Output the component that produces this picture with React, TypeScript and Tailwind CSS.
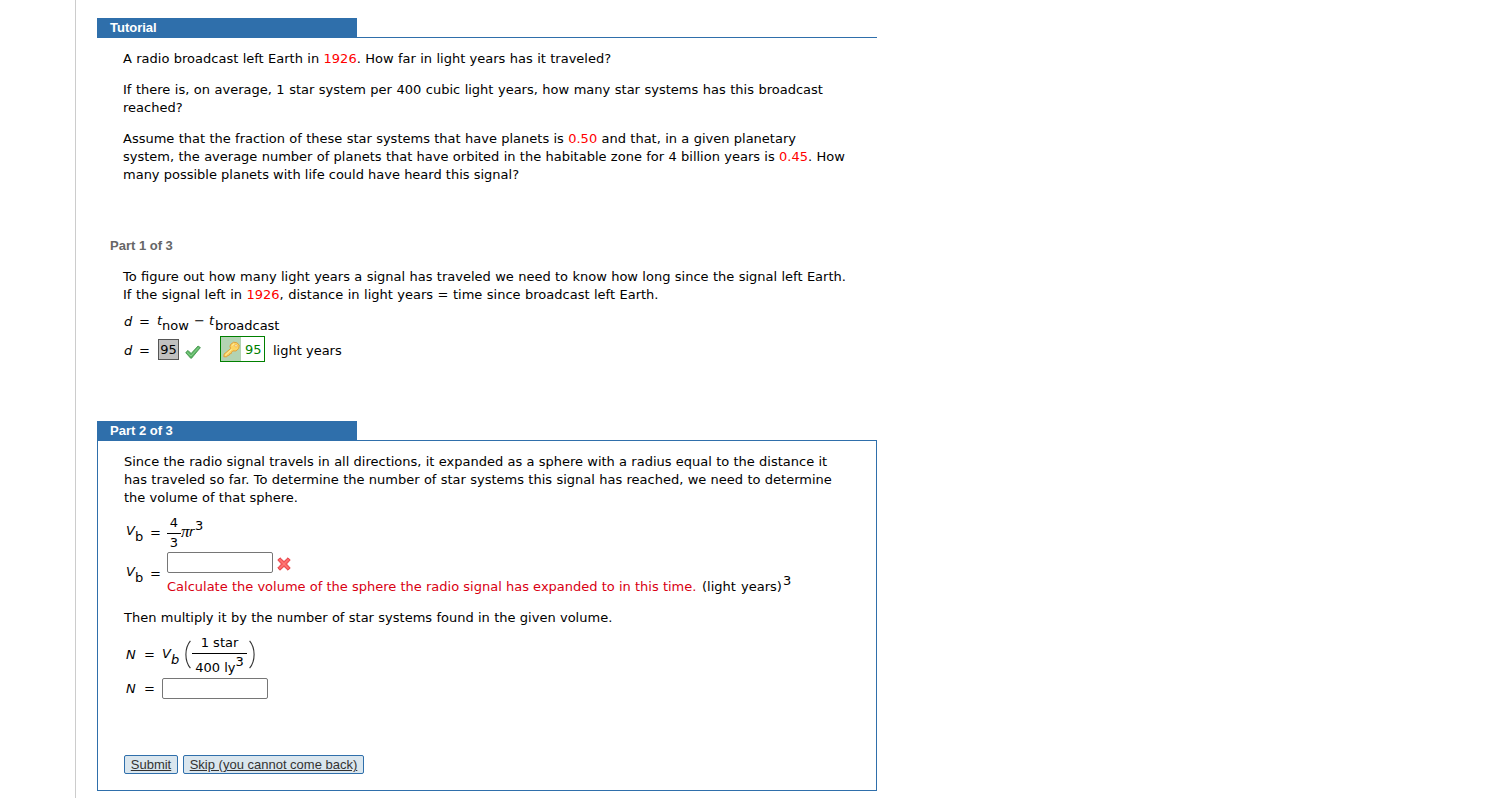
import type { ReactNode } from 'react';

function Val({ children }: { children: ReactNode }) {
    return <span className="text-[#ff0000]">{children}</span>;
}

// One equation row, every term hangs from the top of the row
function Row({ className, children }: { className: string; children: ReactNode }) {
    return <div className={`flex items-start whitespace-pre ${className}`}>{children}</div>;
}

function Heading({ children }: { children: ReactNode }) {
    return (
        <h2 className="w-[260px] h-5 pl-[13px] bg-[#2f6fab] text-white font-bold text-[13px] leading-[19px] font-['Liberation_Sans',Arial,sans-serif]">
            {children}
        </h2>
    );
}

function CheckIcon() {
    return (
        <svg width="16" height="14" viewBox="0 0 16 14">
            <path d="M0.7 7.6L3 5.4L6.1 8.5L13 1L15.4 2.6L6.6 13.2H5.6Z" fill="#5cb564" stroke="#3d8f45" strokeWidth="0.8" strokeLinejoin="round" />
            <path d="M2 7.3L6 11L13.7 2.5" fill="none" stroke="#8ad28e" strokeWidth="0.9" />
        </svg>
    );
}

function KeyIcon() {
    return (
        <svg width="18" height="18" viewBox="0 0 18 18">
            <path d="M7.6 3.4L10.6 1.2L13.9 1.8L16.2 4L15.8 7.4L13 10L9.8 9.9L8.6 11.2L8.2 12.6L6.8 12.8L6.2 14.2L4.6 14.5L3.8 15.8L0.9 15.8L1 13.2L7.6 7.6L7 5.4Z" fill="#fcd562" stroke="#e0a03a" strokeWidth="1" strokeLinejoin="round" />
            <path d="M8.6 8.3L2.3 14.2M8.8 4.6L11 2.8" stroke="#fff0a8" strokeWidth="1" fill="none" />
            <circle cx="13" cy="4.8" r="1.1" fill="#fff" stroke="#e0a03a" strokeWidth="0.6" />
        </svg>
    );
}

function CrossIcon() {
    return (
        <svg width="14" height="14" viewBox="0 0 14 14">
            <path d="M3 0.8L7 4.6L11 0.8L13.2 3L9.5 7L13.2 11L11 13.2L7 9.4L3 13.2L0.8 11L4.5 7L0.8 3Z" fill="#fb6464" stroke="#e33e44" strokeWidth="1" strokeLinejoin="round" />
            <path d="M3 2.8L11 11.2M11 2.8L3 11.2" stroke="#ff7a76" strokeWidth="1" />
        </svg>
    );
}

function Paren({ flip }: { flip?: boolean }) {
    return (
        <svg width="6" height="29" viewBox="0 0 6 29" className={flip ? '-scale-x-100' : ''}>
            <path d="M5.4 0.8C-0.6 8 -0.6 21 5.4 28.2" fill="none" stroke="#333" strokeWidth="1.1" />
        </svg>
    );
}

const inputStyle = 'block w-[106px] h-[21px] bg-white border border-[#767676] rounded-[2px] px-1 outline-none';
const buttonStyle = "h-[19px] bg-[#dae6ee] border border-[#2f6fab] rounded-[2px] text-[13px] leading-[17px] text-[#333] underline text-center font-['Liberation_Sans',Arial,sans-serif] whitespace-nowrap";

export default function App() {
    return (
        <main className="h-[798px] overflow-hidden bg-white pl-[75px] text-[13px] leading-[18px] text-black font-['Verdana','DejaVu_Sans',sans-serif]">
            <div className="h-full border-l border-[#ccc] pl-[21px] pt-[18px]">
                <div className="w-[780px]">
                    {/* Tutorial */}
                    <section className="h-[220px]">
                        <div className="border-b border-[#2f6fab] h-5">
                            <Heading>Tutorial</Heading>
                        </div>
                        <div className="pl-[26px] pt-3 whitespace-nowrap">
                            <p className="mb-[13px] [word-spacing:0.25px]">A radio broadcast left Earth in <Val>1926</Val>. How far in light years has it traveled?</p>
                            <p className="mb-[13px] [word-spacing:0.37px]">
                                If there is, on average, 1 star system per 400 cubic light years, how many star systems has this broadcast<br />
                                reached?
                            </p>
                            <p className="[word-spacing:0.2px]">
                                Assume that the fraction of these star systems that have planets is <Val>0.50</Val> and that, in a given planetary<br />
                                system, the average number of planets that have orbited in the habitable zone for 4 billion years is <Val>0.45</Val>. How<br />
                                <span className="[word-spacing:0]">many possible planets with life could have heard this signal?</span>
                            </p>
                        </div>
                    </section>

                    {/* Part 1 */}
                    <section className="h-[183px]">
                        <h2 className="pl-[13px] font-bold text-[13px] leading-4 text-[#666] font-['Liberation_Sans',Arial,sans-serif]">Part 1 of 3</h2>
                        <div className="pl-[26px] pt-[14px] whitespace-nowrap">
                            <p className="[word-spacing:0.24px]">
                                To figure out how many light years a signal has traveled we need to know how long since the signal left Earth.<br />
                                <span className="[word-spacing:0.34px]">If the signal left in <Val>1926</Val>, distance in light years = time since broadcast left Earth.</span>
                            </p>
                            <Row className="h-8 pt-[9px]">
                                <i className="ml-px w-[15px]">d</i>
                                <span className="w-[18px]">=</span>
                                <i className="w-[5px] -mt-px">t</i>
                                <span className="w-8 mt-1">now</span>
                                <span className="w-[15px] -mt-px">−</span>
                                <i className="w-[6px] -mt-px">t</i>
                                <span className="mt-1">broadcast</span>
                            </Row>
                            <Row className="h-[26px]">
                                <i className="ml-px mt-[6px] w-[15px]">d</i>
                                <span className="mt-[6px] w-[19px]">=</span>
                                <span className="mt-[3px] w-[21px] h-[21px] leading-5 bg-[#c0c0c0] border border-[#555] text-center">95</span>
                                <span className="mt-[9px] ml-1.5 w-[35px]"><CheckIcon /></span>
                                <span className="flex w-[45px] h-[26px] border border-[#008000] text-[#008000]">
                                    <span className="w-5 h-6 bg-[#b3d3b3] pl-0.5 pt-1"><KeyIcon /></span>
                                    <span className="ml-1 mt-1">95</span>
                                </span>
                                <span className="mt-[6px] ml-2">light years</span>
                            </Row>
                        </div>
                    </section>

                    {/* Part 2 */}
                    <section>
                        <Heading>Part 2 of 3</Heading>
                        <div className="-mt-px h-[351px] border border-[#2f6fab] pl-[26px] pt-[12px] whitespace-nowrap">
                            <p className="[word-spacing:0.14px]">
                                Since the radio signal travels in all directions, it expanded as a sphere with a radius equal to the distance it<br />
                                <span className="[word-spacing:0.2px]">has traveled so far. To determine the number of star systems this signal has reached, we need to determine</span><br />
                                the volume of that sphere.
                            </p>
                            <Row className="h-[45px] pt-[8px]">
                                <i className="ml-0.5 mt-[7px] w-2">V</i>
                                <span className="mt-[13px] ml-px w-[15px]">b</span>
                                <span className="mt-[9px] w-[17px]">=</span>
                                <span className="flex flex-col items-center w-[14px]">
                                    <span className="h-[19px] leading-4 w-full border-b border-black text-center">4</span>
                                    <span>3</span>
                                </span>
                                <i className="mt-2 w-2 font-['Liberation_Serif',serif] text-[17px]">π</i>
                                <i className="mt-2 w-[6px]">r</i>
                                <span className="mt-[2px]">3</span>
                            </Row>
                            <Row className="h-[48px]">
                                <i className="ml-0.5 mt-[11px] w-2">V</i>
                                <span className="mt-[17px] ml-px w-[15px]">b</span>
                                <span className="mt-[13px] w-[17px]">=</span>
                                <div>
                                    <div className="flex items-start">
                                        <input type="text" className={inputStyle} />
                                        <span className="ml-1 mt-[5px]"><CrossIcon /></span>
                                    </div>
                                    <div className="flex items-start mt-1">
                                        <span className="mt-px w-[535px] text-[#d90012] [word-spacing:0.05px]">Calculate the volume of the sphere the radio signal has expanded to in this time.</span>
                                        <span className="mt-px w-[81px] [word-spacing:1px]">(light years)</span>
                                        <span className="-mt-[5px]">3</span>
                                    </div>
                                </div>
                            </Row>
                            <p className="mt-[9px] [word-spacing:0.2px]">Then multiply it by the number of star systems found in the given volume.</p>
                            <Row className="h-[51px] pt-[7px]">
                                <i className="ml-0.5 mt-3 w-[18px]">N</i>
                                <span className="mt-3 w-[18px]">=</span>
                                <i className="mt-[11px] w-[9px]">V</i>
                                <i className="mt-[17px] w-[14px]">b</i>
                                <span className="mt-[6px] w-[7px]"><Paren /></span>
                                <span className="flex flex-col items-center w-[55px]">
                                    <span className="h-[20px] w-full border-b border-black text-center">1 star</span>
                                    <span className="flex items-start"><span className="mt-[5px]">400 ly</span><span className="-mt-px">3</span></span>
                                </span>
                                <span className="ml-0.5 mt-[6px]"><Paren flip /></span>
                            </Row>
                            <Row className="h-[77px]">
                                <i className="ml-0.5 mt-[2px] w-[18px]">N</i>
                                <span className="mt-[2px] w-[18px]">=</span>
                                <input type="text" className={inputStyle} />
                            </Row>
                            <div className="flex gap-[5px]">
                                <button type="button" className={`w-[54px] ${buttonStyle}`}>Submit</button>
                                <button type="button" className={`w-[181px] ${buttonStyle}`}>Skip (you cannot come back)</button>
                            </div>
                        </div>
                    </section>
                </div>
            </div>
        </main>
    );
}
